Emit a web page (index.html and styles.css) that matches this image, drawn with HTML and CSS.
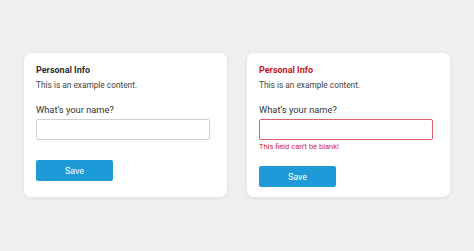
FILE: index.html
```html
<!DOCTYPE html>
<html lang="en">
<head>
    <meta charset="UTF-8">
    <meta name="viewport" content="width=device-width, initial-scale=1.0">
    <title>Personal Info</title>
    <link rel="stylesheet" href="styles.css">
</head>
<body>
    <main class="cards">
        <form class="card">
            <h2 class="card-title">Personal Info</h2>
            <p class="card-text">This is an example content.</p>
            <div class="field">
                <label for="name1">What’s your name?</label>
                <input type="text" id="name1">
            </div>
            <div class="actions">
                <button type="button">Save</button>
            </div>
        </form>
        <form class="card card-error">
            <h2 class="card-title">Personal Info</h2>
            <p class="card-text">This is an example content.</p>
            <div class="field has-error">
                <label for="name2">What’s your name?</label>
                <input type="text" id="name2">
                <span class="error">This field can’t be blank!</span>
            </div>
            <div class="actions">
                <button type="button">Save</button>
            </div>
        </form>
    </main>
</body>
</html>
```

FILE: styles.css
```css
body {
    font-family: Roboto, "Noto Sans", sans-serif;
    margin: 0;
    padding: 0;
    background-color: #efefef;
    color: #333;
}
.cards {
    display: flex;
    gap: 20px;
    padding: 53px 24px;
}
.card {
    flex: 1;
    background-color: white;
    border-radius: 7px;
    box-shadow: 0 1px 4px rgba(0,0,0,0.08);
    padding: 10px 12px;
}
.card-title {
    font-size: 9px;
    font-weight: 700;
    line-height: 14px;
    margin: 0;
    color: #2e2e2e;
}
.card-error .card-title {
    color: #c4161c;
}
.card-text {
    font-size: 8.3px;
    line-height: 14px;
    margin: 1px 0 0;
    color: #444;
}
.field {
    display: flex;
    flex-direction: column;
    margin-top: 11px;
}
.field label {
    font-size: 9.3px;
    line-height: 14px;
    color: #333;
}
.field input {
    margin-top: 2px;
    height: 21px;
    box-sizing: border-box;
    border: 1px solid #cfcfcf;
    border-radius: 2px;
    width: 174px;
}
.has-error input {
    border-color: #e06068;
}
.error {
    font-size: 7.5px;
    line-height: 12px;
    margin-top: 1px;
    color: #d0282e;
}
.actions {
    margin-top: 20px;
}
.has-error + .actions {
    margin-top: 13px;
}
button {
    display: block;
    width: 77px;
    height: 21px;
    background-color: #1e9ad9;
    color: white;
    border: none;
    border-radius: 2px;
    font-family: inherit;
    font-size: 9px;
    cursor: pointer;
}
```
